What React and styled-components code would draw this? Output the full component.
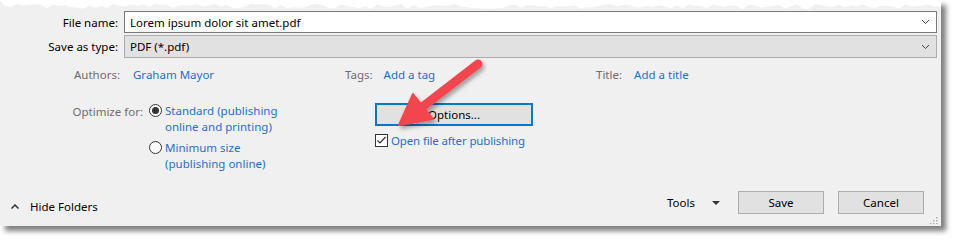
import React from 'react';
import styled, { createGlobalStyle } from 'styled-components';

const GlobalStyle = createGlobalStyle`
	body {
		margin: 0;
		background: #ffffff;
		font-family: 'Noto Sans', 'Open Sans', sans-serif;
		font-size: 11.5px;
		color: #000;
	}
`;

// torn top edge of the screenshot, deterministic "noise"
const tornPath = (() => {
	let seed = 7;
	const rnd = () => {
		seed = (seed * 9301 + 49297) % 233280;
		return seed / 233280;
	};
	let d = 'M0 0 L941 0 L941 9';
	for (let x = 941; x >= 0; x -= 6) {
		const y = 4 + rnd() * 5;
		d += ` L${x} ${y.toFixed(1)}`;
	}
	return d + ' L0 0 Z';
})();

const Page = styled.div`
	padding-bottom: 10px;
`;

const Panel = styled.div`
	position: relative;
	width: 941px;
	height: 226px;
	box-sizing: border-box;
	background: #f0f0f0;
	box-shadow: 5px 5px 5px rgba(0, 0, 0, 0.5);
	padding: 11px 4px 0 0;
	display: flex;
	flex-direction: column;
`;

const TornEdge = styled.svg`
	position: absolute;
	top: 0;
	left: 0;
`;

const FieldRow = styled.div`
	display: grid;
	grid-template-columns: 118px 1fr;
	column-gap: 6px;
	align-items: center;
	margin-bottom: ${(p) => p.$gap || 0}px;
`;

const FieldLabel = styled.div`
	text-align: right;
`;

const Combo = styled.div`
	height: ${(p) => p.$h}px;
	box-sizing: border-box;
	border: 1px solid ${(p) => (p.$readonly ? '#adadad' : '#7a7a7a')};
	background: ${(p) => (p.$readonly ? '#e1e1e1' : '#ffffff')};
	display: flex;
	align-items: center;
	justify-content: space-between;
	padding: 0 6px 0 5px;
`;

const MetaRow = styled.div`
	display: flex;
	margin-top: 8px;
	height: 16px;
	align-items: center;
`;

const MetaGroup = styled.div`
	display: flex;
	width: ${(p) => (p.$w ? `${p.$w}px` : 'auto')};
`;

const MetaLabel = styled.span`
	color: #6d6d6d;
	width: ${(p) => (p.$w ? `${p.$w}px` : 'auto')};
	text-align: right;
	flex-shrink: 0;
`;

const Link = styled.span`
	color: #1f6ed4;
	margin-left: ${(p) => p.$ml || 0}px;
`;

const OptionsArea = styled.div`
	display: grid;
	grid-template-columns: 143px 226px 1fr;
	margin-top: 21px;
`;

const OptimizeLabel = styled.div`
	color: #6d6d6d;
	text-align: right;
	padding-top: 1px;
`;

const RadioList = styled.div`
	display: flex;
	flex-direction: column;
	gap: 5px;
	padding-left: 6px;
`;

const Choice = styled.div`
	display: flex;
	align-items: flex-start;
	gap: 3px;
	color: #1f6ed4;
	line-height: 16px;
`;

const Radio = styled.span`
	width: 13px;
	height: 13px;
	box-sizing: border-box;
	border: 1px solid #333;
	border-radius: 50%;
	background: #fff;
	margin-top: 1px;
	flex-shrink: 0;
	display: flex;
	align-items: center;
	justify-content: center;
	&::after {
		content: '';
		width: 7px;
		height: 7px;
		border-radius: 50%;
		background: ${(p) => (p.$checked ? '#333' : 'transparent')};
	}
`;

const PublishColumn = styled.div`
	display: flex;
	flex-direction: column;
	align-items: flex-start;
	padding-left: 6px;
	margin-top: 0;
`;

const Button = styled.div`
	width: ${(p) => p.$w}px;
	height: 23px;
	box-sizing: border-box;
	border: ${(p) => (p.$focused ? '2px solid #0078d7' : '1px solid #adadad')};
	background: #e1e1e1;
	display: flex;
	align-items: center;
	justify-content: center;
`;

const CheckRow = styled.div`
	display: flex;
	align-items: center;
	gap: 3px;
	margin-top: 7px;
	color: #1f6ed4;
	letter-spacing: -0.15px;
`;

const CheckBox = styled.span`
	width: 13px;
	height: 13px;
	box-sizing: border-box;
	border: 1px solid #333;
	background: #fff;
	display: flex;
	align-items: center;
	justify-content: center;
`;

const BottomBar = styled.div`
	margin-top: auto;
	margin-bottom: 12px;
	display: flex;
	align-items: center;
	padding-left: 11px;
	padding-right: 13px;
`;

const HideFolders = styled.div`
	display: flex;
	align-items: center;
	gap: 11px;
	margin-top: 8px;
`;

const Tools = styled.div`
	margin-left: auto;
	display: flex;
	align-items: center;
	gap: 17px;
	margin-right: 18px;
`;

const ButtonGroup = styled.div`
	display: flex;
	gap: 14px;
`;

const Grip = styled.svg`
	position: absolute;
	right: 3px;
	bottom: 2px;
`;

const Pointer = styled.svg`
	position: absolute;
	left: 385px;
	top: 52px;
	overflow: visible;
`;

const Chevron = () => (
	<svg width='9' height='6' viewBox='0 0 9 6'>
		<path d='M1 1 L4.5 4.5 L8 1' fill='none' stroke='#444' strokeWidth='1' />
	</svg>
);

const App = () => {
	return (
		<Page>
			<GlobalStyle />
			<Panel>
				<TornEdge width='941' height='11' viewBox='0 0 941 11'>
					<path d={tornPath} fill='#ffffff' />
				</TornEdge>

				<FieldRow $gap={2}>
					<FieldLabel>File name:</FieldLabel>
					<Combo $h={22}>
						<span>Lorem ipsum dolor sit amet.pdf</span>
						<Chevron />
					</Combo>
				</FieldRow>
				<FieldRow>
					<FieldLabel>Save as type:</FieldLabel>
					<Combo $h={23} $readonly>
						<span>PDF (*.pdf)</span>
						<Chevron />
					</Combo>
				</FieldRow>

				<MetaRow>
					<MetaGroup $w={345}>
						<MetaLabel $w={120}>Authors:</MetaLabel>
						<Link $ml={13}>Graham Mayor</Link>
					</MetaGroup>
					<MetaGroup $w={251}>
						<MetaLabel>Tags:</MetaLabel>
						<Link $ml={11}>Add a tag</Link>
					</MetaGroup>
					<MetaGroup>
						<MetaLabel>Title:</MetaLabel>
						<Link $ml={12}>Add a title</Link>
					</MetaGroup>
				</MetaRow>

				<OptionsArea>
					<OptimizeLabel>Optimize for:</OptimizeLabel>
					<RadioList>
						<Choice>
							<Radio $checked />
							<span>
								Standard (publishing
								<br />
								online and printing)
							</span>
						</Choice>
						<Choice>
							<Radio />
							<span>
								Minimum size
								<br />
								(publishing online)
							</span>
						</Choice>
					</RadioList>
					<PublishColumn>
						<Button $w={158} $focused>
							Options...
						</Button>
						<CheckRow>
							<CheckBox>
								<svg width='11' height='11' viewBox='0 0 11 11'>
									<path
										d='M1.5 5.5 L4 8 L9.5 2'
										fill='none'
										stroke='#333'
										strokeWidth='1.2'
									/>
								</svg>
							</CheckBox>
							<span>Open file after publishing</span>
						</CheckRow>
					</PublishColumn>
				</OptionsArea>

				<BottomBar>
					<HideFolders>
						<svg width='8' height='5' viewBox='0 0 8 5'>
							<path d='M0.5 4.5 L4 1 L7.5 4.5' fill='none' stroke='#333' strokeWidth='1.5' />
						</svg>
						<span>Hide Folders</span>
					</HideFolders>
					<Tools>
						<span>Tools</span>
						<svg width='8' height='4' viewBox='0 0 8 4'>
							<path d='M0 0 L8 0 L4 4 Z' fill='#333' />
						</svg>
					</Tools>
					<ButtonGroup>
						<Button $w={86}>Save</Button>
						<Button $w={86}>Cancel</Button>
					</ButtonGroup>
				</BottomBar>

				<Grip width='9' height='7' viewBox='0 0 9 7'>
					{[
						[7, 0],
						[4, 3],
						[7, 3],
						[1, 6],
						[4, 6],
						[7, 6],
					].map(([x, y]) => (
						<rect key={`${x}-${y}`} x={x} y={y} width='1.5' height='1.5' fill='#b0b0b0' />
					))}
				</Grip>

				<Pointer width='100' height='80' viewBox='0 0 100 80'>
					<defs>
						<filter id='arrowShadow' x='-20%' y='-20%' width='150%' height='150%'>
							<feDropShadow dx='2' dy='3' stdDeviation='2' floodColor='#000' floodOpacity='0.35' />
						</filter>
					</defs>
					<g filter='url(#arrowShadow)' fill='#f2444e' stroke='#f2444e'>
						<line x1='93' y1='12' x2='36' y2='56' strokeWidth='9' strokeLinecap='round' />
						<polygon points='14,73 48,67 28,42' strokeWidth='2' strokeLinejoin='round' />
					</g>
				</Pointer>
			</Panel>
		</Page>
	);
};

export default App;
